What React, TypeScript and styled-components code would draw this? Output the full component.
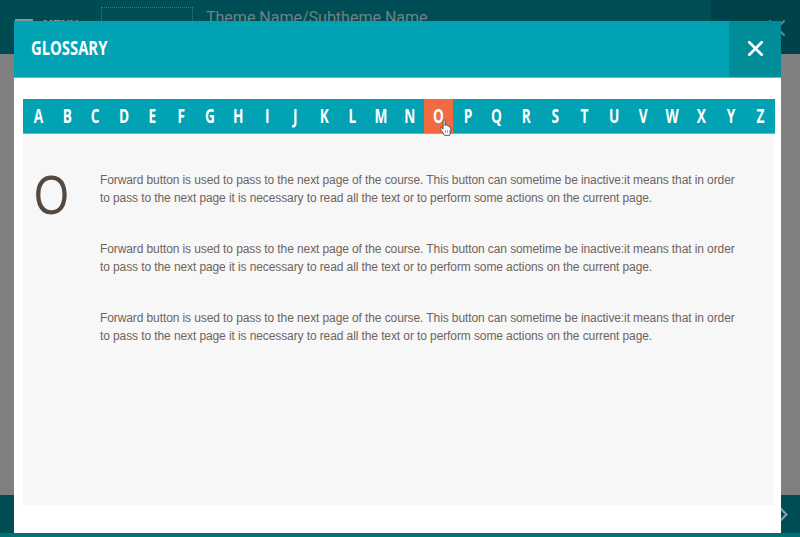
import React from "react";
import styled, { createGlobalStyle } from "styled-components";
import { X } from "lucide-react";

const LETTERS = "ABCDEFGHIJKLMNOPQRSTUVWXYZ".split("");
const ENTRY =
  "Forward button is used to pass to the next page of the course. This button can sometime be inactive:it means that in order to pass to the next page it is necessary to read all the text or to perform some actions on the current page.";

const HandCursor = () => (
  <CursorSvg viewBox="0 0 14 20" aria-hidden="true">
    <path
      d="M3.6 1.6c0-1.2 1.9-1.2 1.9 0v5.2l.3-1c.8-.6 1.7-.3 1.8.6l.1.6c.5-.7 1.6-.5 1.8.4v.7c.6-.6 1.7-.3 1.8.7.2 1.8.1 3.7-.5 5.3l-.5 2.2H4.9L3.6 14 1 10.2c-.6-1 .6-2 1.5-1.2l1.1 1.2z"
      fill="#fff"
      stroke="#4a4a4a"
      strokeWidth="0.9"
      strokeLinejoin="round"
    />
    <path d="M6 11v3M8 11v3M10 11v3" stroke="#6a6a6a" strokeWidth="0.6" />
  </CursorSvg>
);

export default function App() {
  return (
    <>
      <GlobalStyle />
      <Page>
        <TopBar>
          <MenuArea>
            <MenuIcon />
            <MenuLabel>MENU</MenuLabel>
          </MenuArea>
          <LogoSlot />
          <ThemeTitle>Theme Name/Subtheme Name</ThemeTitle>
          <TopClose>
            <X size={28} strokeWidth={1.8} />
          </TopClose>
        </TopBar>
        <Stage />
        <BottomBar>
          <Chevron viewBox="0 0 12 20" aria-hidden="true">
            <path d="M2 2l8 8-8 8" fill="none" stroke="#8a9c9e" strokeWidth="3" />
          </Chevron>
        </BottomBar>

        <Dialog>
          <DialogHeader>
            <DialogTitle>
              <Condensed>GLOSSARY</Condensed>
            </DialogTitle>
            <CloseButton aria-label="Close">
              <X size={25} strokeWidth={2.6} />
            </CloseButton>
          </DialogHeader>
          <DialogBody>
            <AlphabetBar>
              {LETTERS.map((l) => (
                <Letter key={l} $active={l === "O"}>
                  <LetterGlyph>{l}</LetterGlyph>
                  {l === "O" && <HandCursor />}
                </Letter>
              ))}
            </AlphabetBar>
            <EntryPanel>
              <BigLetter>O</BigLetter>
              <EntryList>
                <Entry>{ENTRY}</Entry>
                <Entry>{ENTRY}</Entry>
                <Entry>{ENTRY}</Entry>
              </EntryList>
            </EntryPanel>
          </DialogBody>
        </Dialog>
      </Page>
    </>
  );
}

const GlobalStyle = createGlobalStyle`
  html, body {
    margin: 0;
    padding: 0;
    height: 100%;
    overflow: hidden;
  }
  * {
    box-sizing: border-box;
  }
`;

const Page = styled.div`
  position: relative;
  display: flex;
  flex-direction: column;
  width: 800px;
  height: 537px;
  background: #808080;
  font-family: "Liberation Sans", Arial, sans-serif;
`;

const TopBar = styled.header`
  display: flex;
  height: 54px;
  background: #004e55;
`;

const MenuArea = styled.div`
  display: flex;
  align-items: flex-start;
  gap: 10px;
  width: 96px;
  height: 100%;
  padding: 19px 0 0 15px;
  background: #004a51;
`;

const MenuIcon = styled.span`
  width: 18px;
  height: 12px;
  border-top: 2px solid #7f9a9c;
  border-bottom: 2px solid #7f9a9c;
`;

const MenuLabel = styled.span`
  font-size: 12px;
  line-height: 12px;
  font-weight: 700;
  color: #7f9a9c;
`;

const LogoSlot = styled.div`
  width: 92px;
  height: 40px;
  margin: 7px 0 0 5px;
  border: 1px dotted #3f7c81;
`;

const ThemeTitle = styled.div`
  flex: 1;
  margin: 8px 0 0 13px;
  font-family: Roboto, sans-serif;
  font-size: 16px;
  color: #6f8284;
`;

const TopClose = styled.div`
  display: flex;
  align-items: flex-start;
  justify-content: flex-end;
  width: 89px;
  height: 100%;
  padding: 14px 9px 0 0;
  background: #00424a;
  color: #6f8082;
`;

const Stage = styled.main`
  flex: 1;
`;

const BottomBar = styled.footer`
  display: flex;
  align-items: center;
  justify-content: flex-end;
  height: 42px;
  padding: 0 12px 0 0;
  background: #004e55;
  border-bottom: 4px solid #00727a;
`;

const Chevron = styled.svg`
  width: 9px;
  height: 15px;
`;

const Dialog = styled.section`
  position: absolute;
  top: 21px;
  left: 14px;
  display: flex;
  flex-direction: column;
  width: 767px;
  height: 512px;
  background: #fff;
`;

const DialogHeader = styled.div`
  display: flex;
  align-items: stretch;
  justify-content: space-between;
  height: 57px;
  background: #00a2b4;
  border-bottom: 1px solid #4fc3d0;
`;

const DialogTitle = styled.h2`
  margin: 0 0 3px;
  padding-left: 17px;
  align-self: center;
  font-family: "Open Sans", sans-serif;
  font-size: 20px;
  line-height: 24px;
  font-weight: 700;
  color: #fff;
`;

const Condensed = styled.span`
  display: inline-block;
  transform: scaleX(0.74);
  transform-origin: left center;
`;

const CloseButton = styled.button`
  display: flex;
  align-items: center;
  justify-content: center;
  width: 52px;
  padding: 0 0 1px 1px;
  border: 0;
  background: #008c98;
  color: #fff;
`;

const DialogBody = styled.div`
  display: flex;
  flex-direction: column;
  flex: 1;
  padding: 21px 6px 28px 9px;
`;

const AlphabetBar = styled.nav`
  display: grid;
  grid-template-columns: repeat(15, 28.6px) repeat(11, 1fr);
  height: 35px;
  padding-left: 1px;
  background: #00a2b4;
  border-bottom: 1px solid #4fc3d0;
`;

const Letter = styled.span<{ $active?: boolean }>`
  position: relative;
  display: flex;
  align-items: center;
  justify-content: center;
  font-family: "Open Sans", sans-serif;
  font-size: 19px;
  font-weight: 700;
  color: #fff;
  background: ${(p) => (p.$active ? "#f26a3f" : "transparent")};
`;

const LetterGlyph = styled.span`
  display: inline-block;
  transform: scaleX(0.72);
`;

const CursorSvg = styled.svg`
  position: absolute;
  top: 20px;
  left: 14px;
  width: 17px;
  height: 20px;
  overflow: visible;
`;

const EntryPanel = styled.div`
  display: flex;
  flex: 1;
  margin-right: 1px;
  padding: 33px 19px 0 11px;
  background: #f7f7f7;
`;

const BigLetter = styled.div`
  width: 66px;
  flex: none;
  margin-top: -2px;
  font-family: "Liberation Sans", sans-serif;
  font-size: 56px;
  line-height: 60px;
  color: #54483f;
  transform: scaleX(0.8);
  transform-origin: left top;
`;

const EntryList = styled.div`
  display: flex;
  flex-direction: column;
  gap: 33px;
  padding-top: 4px;
  max-width: 640px;
`;

const Entry = styled.p`
  margin: 0;
  font-size: 12px;
  line-height: 18px;
  letter-spacing: -0.1px;
  color: #6f645c;
`;
